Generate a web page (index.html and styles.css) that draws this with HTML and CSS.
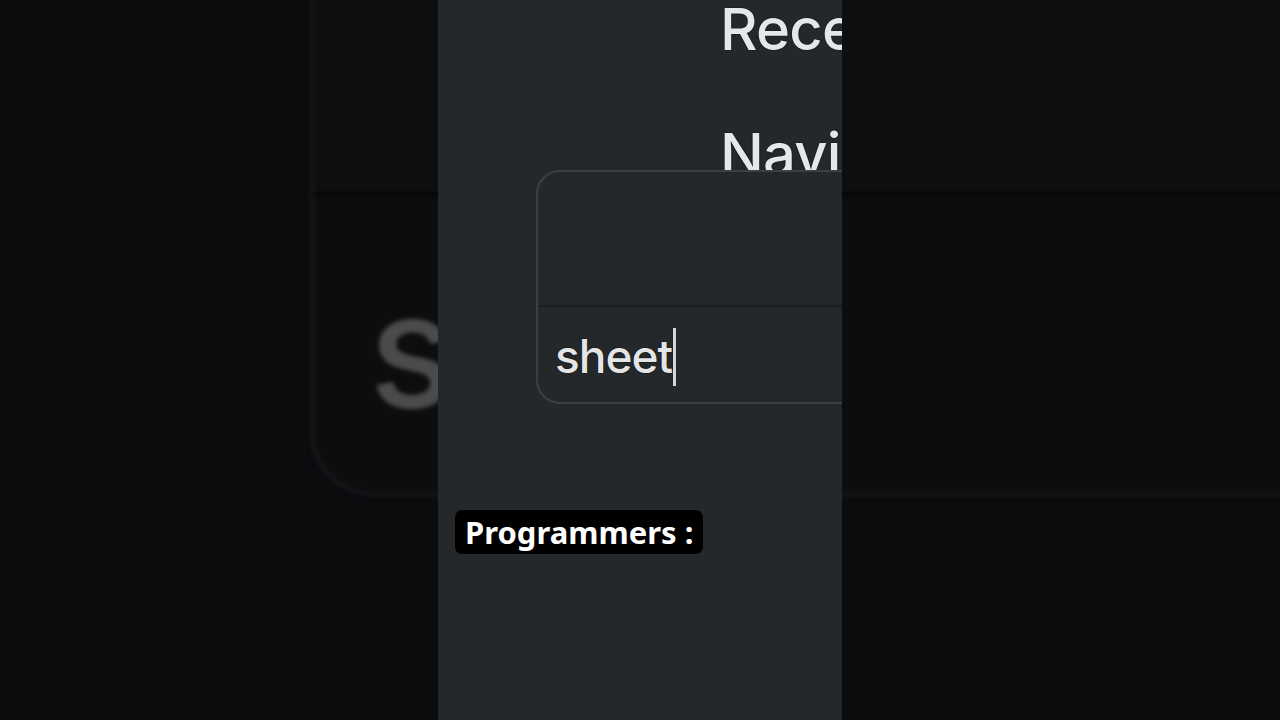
FILE: index.html
```html
<!DOCTYPE html>
<html lang="en">
<head>
<meta charset="utf-8">
<title>Programmers</title>
<link rel="stylesheet" href="styles.css">
</head>
<body>
<div class="stage">
  <div class="backdrop" aria-hidden="true">
    <div class="bg-box">
      <div class="bg-top"></div>
      <div class="bg-bottom"><span class="bg-letter">s</span></div>
    </div>
  </div>
  <main class="panel">
    <div class="menu">
      <div class="menu-item">Recent files</div>
      <div class="menu-item">Navigation</div>
    </div>
    <div class="search">
      <div class="search-top"></div>
      <div class="search-input"><span class="query">sheet</span><span class="caret"></span></div>
    </div>
    <div class="caption">Programmers :</div>
  </main>
</div>
</body>
</html>
```

FILE: styles.css
```css
* { box-sizing: border-box; }
html, body { margin: 0; padding: 0; background: #0b0c0e; }
.stage {
  position: relative;
  width: 1280px;
  height: 720px;
  overflow: hidden;
  display: flex;
  justify-content: center;
  background: #0b0c0e;
  font-family: Inter, "Liberation Sans", sans-serif;
}
.backdrop {
  position: absolute;
  inset: 0;
  z-index: 0;
  filter: blur(2px);
}
.bg-box {
  margin-left: 310px;
  margin-top: -200px;
  width: 1200px;
  height: 696px;
  border: 4px solid #17181a;
  border-radius: 64px;
  background: #0c0d0f;
  display: flex;
  flex-direction: column;
  overflow: hidden;
}
.bg-top {
  height: 393px;
  border-bottom: 5px solid #060607;
  background: #0d0e10;
}
.bg-bottom {
  flex: 1;
  padding-left: 55px;
  padding-top: 72px;
}
.bg-letter {
  display: block;
  font-size: 160px;
  line-height: 1;
  font-weight: 500;
  color: #4a4b4d;
}
.panel {
  position: relative;
  z-index: 1;
  width: 404px;
  height: 720px;
  flex: none;
  background: #25282b;
  overflow: hidden;
  display: flex;
  flex-direction: column;
}
.menu {
  display: flex;
  flex-direction: column;
  gap: 67px;
  padding-left: 282px;
}
.menu-item {
  font-size: 58px;
  line-height: 58px;
  font-weight: 500;
  color: #e6e7e8;
  white-space: nowrap;
  letter-spacing: -0.8px;
  text-shadow: 0 0 1px #000, 0 0 1px #000;
}
.search {
  position: relative;
  margin-top: -13px;
  margin-left: 98px;
  width: 420px;
  height: 234px;
  flex: none;
  border: 2px solid #3d4043;
  border-radius: 24px;
  background: #25282b;
  display: flex;
  flex-direction: column;
}
.search-top {
  height: 135px;
  border-bottom: 2px solid #1b1d1f;
}
.search-input {
  flex: 1;
  display: flex;
  align-items: center;
  padding-left: 17px;
  padding-top: 2px;
}
.query {
  font-size: 46px;
  line-height: 58px;
  font-weight: 500;
  color: #e4e5e6;
  letter-spacing: -1px;
  text-shadow: 0 0 1px #000, 0 0 1px #000;
}
.caret {
  display: block;
  width: 3px;
  height: 58px;
  margin-left: 1px;
  margin-top: 2px;
  background: #d6d7d8;
  box-shadow: 0 0 1px #000;
}
.caption {
  align-self: flex-start;
  margin-top: 106px;
  margin-left: 17px;
  height: 44px;
  padding: 0 10px;
  background: #000;
  border-radius: 7px;
  display: flex;
  align-items: center;
  font-family: "Noto Sans", "Open Sans", sans-serif;
  font-weight: 700;
  font-size: 31px;
  color: #fff;
  white-space: nowrap;
}
```
